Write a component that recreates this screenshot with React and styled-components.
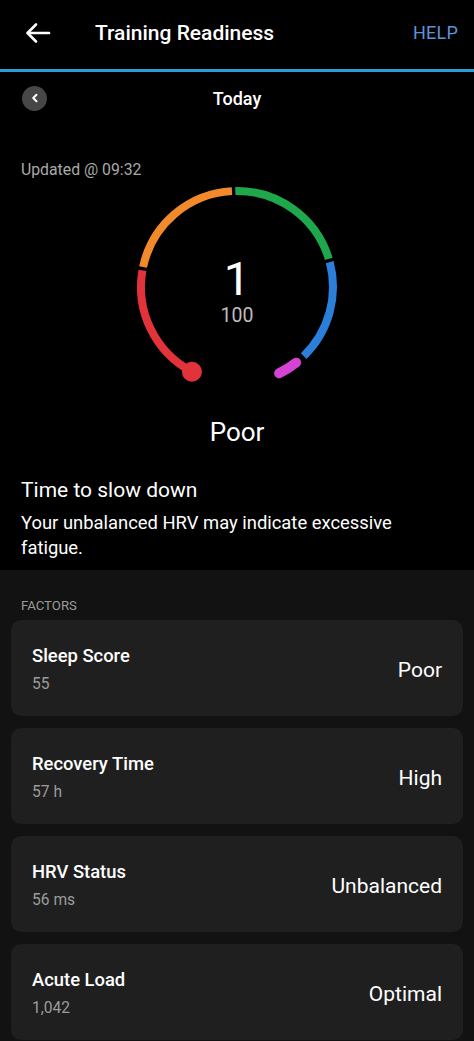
import React from "react";
import styled, { createGlobalStyle } from "styled-components";

const GlobalStyle = createGlobalStyle`
  html, body {
    margin: 0;
    padding: 0;
    background: #000;
  }
  body {
    font-family: Roboto, "Noto Sans", "Liberation Sans", sans-serif;
    color: #fff;
    -webkit-font-smoothing: antialiased;
  }
`;

const Screen = styled.div`
  width: 474px;
  min-height: 1041px;
  background: #000;
  overflow: hidden;
`;

const Header = styled.header`
  box-sizing: content-box;
  height: 65px;
  display: flex;
  align-items: center;
  padding: 0 16px 4px 24px;
  border-bottom: 3px solid #2a9fd6;
`;

const BackButton = styled.button`
  width: 28px;
  height: 28px;
  padding: 0;
  border: none;
  background: transparent;
  display: flex;
  align-items: center;
  justify-content: center;
  cursor: pointer;
`;

const Title = styled.h1`
  flex: 1;
  margin: 0 0 0 43px;
  font-size: 21px;
  font-weight: 500;
`;

const HelpLink = styled.a`
  font-size: 18px;
  color: #5b93dc;
  text-decoration: none;
  letter-spacing: 0.2px;
`;

const DateRow = styled.div`
  height: 52px;
  display: flex;
  align-items: center;
  padding: 0 22px;
`;

const RoundButton = styled.button`
  width: 25px;
  height: 25px;
  border-radius: 50%;
  border: none;
  padding: 0;
  background: #474747;
  display: flex;
  align-items: center;
  justify-content: center;
`;

const DateLabel = styled.div`
  flex: 1;
  text-align: center;
  font-size: 18px;
  font-weight: 500;
  margin-right: 25px;
`;

const Summary = styled.section`
  padding: 36px 21px 10px;
`;

const Updated = styled.div`
  font-size: 15.8px;
  line-height: 20px;
  color: #a9a9a9;
`;

const GaugeWrap = styled.div`
  display: flex;
  justify-content: center;
`;

const Status = styled.div`
  margin-top: 26px;
  text-align: center;
  font-size: 26px;
  line-height: 32px;
`;

const Headline = styled.h2`
  margin: 29px 0 0;
  font-size: 21px;
  line-height: 26px;
  font-weight: 400;
`;

const Message = styled.p`
  margin: 7px 0 0;
  font-size: 18.4px;
  line-height: 25px;
`;

const Factors = styled.section`
  background: #121212;
  padding: 28px 11px 0;
  min-height: 471px;
`;

const SectionLabel = styled.div`
  font-size: 13.2px;
  line-height: 16px;
  color: #9b9b9b;
  padding-left: 10px;
  margin-bottom: 6px;
`;

const CardList = styled.div`
  display: flex;
  flex-direction: column;
  gap: 12px;
`;

const Card = styled.div`
  height: 96px;
  box-sizing: border-box;
  background: #1f1f1f;
  border-radius: 10px;
  padding: 0 21px;
  display: flex;
  align-items: center;
  justify-content: space-between;
`;

const CardText = styled.div`
  display: flex;
  flex-direction: column;
  gap: 7px;
  margin-top: 3px;
`;

const CardTitle = styled.div`
  font-size: 18.4px;
  line-height: 22px;
  font-weight: 500;
`;

const CardSub = styled.div`
  font-size: 15.6px;
  line-height: 20px;
  color: #9c9c9c;
`;

const CardValue = styled.div`
  font-size: 21px;
  line-height: 26px;
  margin-top: 3px;
`;

const CX = 120;
const CY = 107;
const R = 96;

const pt = (deg) => {
  const a = (deg * Math.PI) / 180;
  return [CX + R * Math.sin(a), CY - R * Math.cos(a)];
};

const arc = (from, to) => {
  const [x1, y1] = pt(from);
  const [x2, y2] = pt(to);
  const large = to - from > 180 ? 1 : 0;
  return `M ${x1.toFixed(2)} ${y1.toFixed(2)} A ${R} ${R} 0 ${large} 1 ${x2.toFixed(2)} ${y2.toFixed(2)}`;
};

// gauge bands, degrees clockwise from 12 o'clock
const segments = [
  { from: -152, to: -80, color: "#e2333b" },
  { from: -78, to: -3, color: "#f28a2b" },
  { from: -1, to: 73, color: "#1fa84b" },
  { from: 75, to: 136, color: "#2b7fdb" },
];

const Gauge = ({ score, max }) => {
  const [dx, dy] = pt(-152);
  return (
    <svg width="240" height="210" viewBox="0 0 240 210">
      {segments.map((s) => (
        <path key={s.from} d={arc(s.from, s.to)} stroke={s.color} strokeWidth="8" fill="none" />
      ))}
      <path d={arc(142, 154)} stroke="#d443d4" strokeWidth="10" strokeLinecap="round" fill="none" />
      <circle cx={dx} cy={dy} r="10" fill="#e2333b" />
      <text x={CX} y="115" textAnchor="middle" fontSize="47" fill="#fff" fontFamily="Roboto, sans-serif">
        {score}
      </text>
      <text x={CX} y="142" textAnchor="middle" fontSize="19.5" fill="#bdbdbd" fontFamily="Roboto, sans-serif">
        {max}
      </text>
    </svg>
  );
};

const factors = [
  { title: "Sleep Score", sub: "55", value: "Poor" },
  { title: "Recovery Time", sub: "57 h", value: "High" },
  { title: "HRV Status", sub: "56 ms", value: "Unbalanced" },
  { title: "Acute Load", sub: "1,042", value: "Optimal" },
];

export default function App() {
  return (
    <Screen>
      <GlobalStyle />
      <Header>
        <BackButton aria-label="Back">
          <svg width="26" height="22" viewBox="0 0 26 22" fill="none" stroke="#fff" strokeWidth="2.6" strokeLinecap="round" strokeLinejoin="round">
            <path d="M24 11H3" />
            <path d="M11 2.5L2.5 11 11 19.5" />
          </svg>
        </BackButton>
        <Title>Training Readiness</Title>
        <HelpLink href="#">HELP</HelpLink>
      </Header>

      <DateRow>
        <RoundButton aria-label="Previous day">
          <svg width="10" height="10" viewBox="0 0 10 10" fill="none" stroke="#fff" strokeWidth="2" strokeLinecap="round" strokeLinejoin="round">
            <path d="M6.5 1.8L3.2 5l3.3 3.2" />
          </svg>
        </RoundButton>
        <DateLabel>Today</DateLabel>
      </DateRow>

      <Summary>
        <Updated>Updated @ 09:32</Updated>
        <GaugeWrap>
          <Gauge score={1} max={100} />
        </GaugeWrap>
        <Status>Poor</Status>
        <Headline>Time to slow down</Headline>
        <Message>Your unbalanced HRV may indicate excessive fatigue.</Message>
      </Summary>

      <Factors>
        <SectionLabel>FACTORS</SectionLabel>
        <CardList>
          {factors.map((f) => (
            <Card key={f.title}>
              <CardText>
                <CardTitle>{f.title}</CardTitle>
                <CardSub>{f.sub}</CardSub>
              </CardText>
              <CardValue>{f.value}</CardValue>
            </Card>
          ))}
        </CardList>
      </Factors>
    </Screen>
  );
}
